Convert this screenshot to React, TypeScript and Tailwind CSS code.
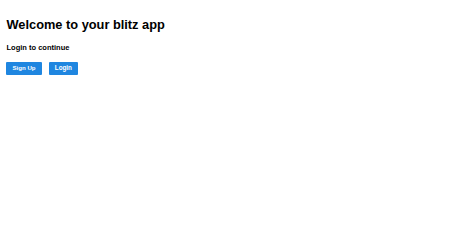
import React from "react";

export default function App() {
  return (
    <div
      className="w-[474px] h-[248px] bg-white pl-[6px] pt-[18px] text-black"
      style={{ fontFamily: '"Liberation Sans", Arial, sans-serif' }}
    >
      <h1 className="text-[12.8px] font-bold leading-[14.7px] pl-[0.5px]">Welcome to your blitz app</h1>
      <h3 className="mt-[11.3px] text-[7.5px] font-bold leading-[8.6px] pl-[0.5px]">Login to continue</h3>
      <div className="mt-[9.4px] flex gap-[6.5px]">
        <button className="h-[13px] px-[6.5px] rounded-[1px] bg-[#1f86e0] text-white text-[6.1px] font-bold leading-none">
          Sign Up
        </button>
        <button className="h-[13px] px-[6.3px] rounded-[1px] bg-[#1f86e0] text-white text-[6.3px] font-bold leading-none">
          Login
        </button>
      </div>
    </div>
  );
}
